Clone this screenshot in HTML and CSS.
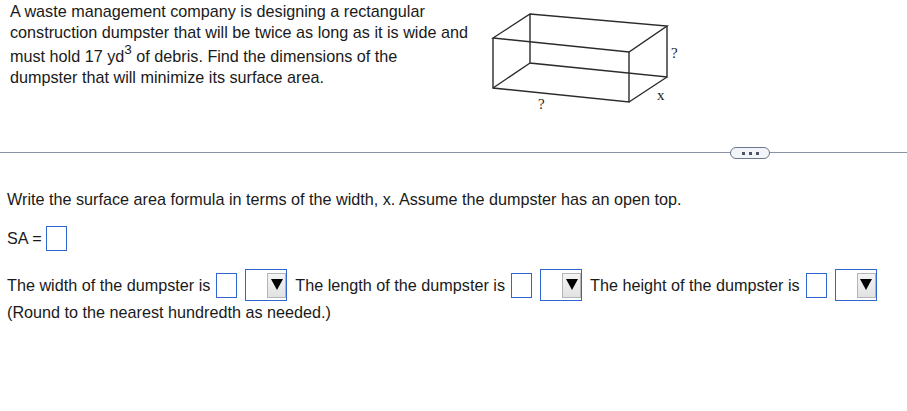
FILE: index.html
```html
<!DOCTYPE html>
<html lang="en">
<head>
  <meta charset="UTF-8">
  <title>Dumpster Problem</title>
  <link rel="stylesheet" href="styles.css">
</head>
<body>
  <div class="problem">
    <div class="problem-text">
      A waste management company is designing a rectangular<br>
      construction dumpster that will be twice as long as it is wide and<br>
      must hold 17 yd<sup>3</sup> of debris. Find the dimensions of the<br>
      dumpster that will minimize its surface area.
    </div>
    <svg class="figure" width="220" height="120" viewBox="480 0 220 120">
      <g class="edges">
        <path d="M493 38 L530 14 L667 26 L629 52 Z"/>
        <path d="M493 38 L493 88 L629 102 L629 52"/>
        <path d="M530 14 L530 63 L667 77 L667 26"/>
        <path d="M493 88 L530 63"/>
        <path d="M629 102 L667 77"/>
      </g>
      <text class="label" x="538" y="109">?</text>
      <text class="label" x="671" y="58">?</text>
      <text class="label" x="657" y="100">x</text>
    </svg>
  </div>

  <div class="divider">
    <div class="more-pill"><span></span><span></span><span></span></div>
  </div>

  <div class="question">
    <p class="prompt">Write the surface area formula in terms of the width, x. Assume the dumpster has an open top.</p>

    <div class="formula">
      <span>SA =</span>
      <span class="answer-box"></span>
    </div>

    <div class="answer-row">
      <span>The width of the dumpster is</span>
      <span class="answer-box short"></span>
      <span class="unit-select"><span class="select-btn"></span></span>
      <span>The length of the dumpster is</span>
      <span class="answer-box short"></span>
      <span class="unit-select"><span class="select-btn"></span></span>
      <span>The height of the dumpster is</span>
      <span class="answer-box short"></span>
      <span class="unit-select"><span class="select-btn"></span></span>
    </div>

    <p class="note">(Round to the nearest hundredth as needed.)</p>
  </div>
</body>
</html>
```

FILE: styles.css
```css
:root {
  --text-color: #1a1a1a;
  --input-border: #2f66d0;
  --rule-color: #8a93a5;
}

body {
  font-family: "Liberation Sans", Arial, sans-serif;
  font-size: 16.2px;
  margin: 0;
  background: #ffffff;
  color: var(--text-color);
}

.problem {
  display: flex;
  height: 152px;
}

.problem-text {
  width: 464px;
  margin-left: 10px;
  margin-right: 6px;
  padding-top: 1px;
  line-height: 21px;
  white-space: nowrap;
}

.problem-text sup {
  font-size: 13.5px;
  line-height: 13px;
  vertical-align: 8px;
}

.figure {
  flex: none;
}

.edges path {
  fill: none;
  stroke: #2b2b2b;
  stroke-width: 1.4;
}

.label {
  font-family: "Liberation Serif", serif;
  font-size: 15px;
  fill: #222222;
}

.divider {
  position: relative;
  height: 1px;
  background: var(--rule-color);
}

.more-pill {
  position: absolute;
  left: 730px;
  top: -5px;
  width: 38px;
  height: 10px;
  display: flex;
  align-items: center;
  justify-content: center;
  gap: 4px;
  background: #f2f4f7;
  border: 1px solid #6c7890;
  border-radius: 6px;
}

.more-pill span {
  width: 3px;
  height: 3px;
  background: #4a5568;
}

.question {
  padding-left: 7px;
}

.prompt {
  margin: 0;
  padding-top: 37px;
  line-height: 18px;
}

.formula {
  display: flex;
  align-items: center;
  gap: 4px;
  margin-top: 18px;
}

.answer-box {
  display: inline-block;
  flex: none;
  box-sizing: border-box;
  width: 21px;
  height: 25px;
  background: #ffffff;
  border: 1px solid var(--input-border);
}

.answer-row {
  display: flex;
  align-items: center;
  margin-top: 18px;
  white-space: nowrap;
}

.answer-box.short {
  margin-left: 6px;
}

.unit-select {
  flex: none;
  box-sizing: border-box;
  display: flex;
  justify-content: flex-end;
  align-items: center;
  width: 42px;
  height: 32px;
  margin-left: 8px;
  margin-right: 8px;
  border: 1px solid var(--input-border);
}

.select-btn {
  box-sizing: border-box;
  display: flex;
  justify-content: center;
  padding-top: 5px;
  width: 19px;
  height: 25px;
  background: linear-gradient(#f4f4f4, #e2e2e2);
  border: 1px solid #b5b5b5;
}

.select-btn::after {
  content: "";
  width: 0;
  height: 0;
  border-left: 6px solid transparent;
  border-right: 6px solid transparent;
  border-top: 11px solid #000000;
}

.note {
  margin: 2px 0 0;
  line-height: 18px;
}
```
